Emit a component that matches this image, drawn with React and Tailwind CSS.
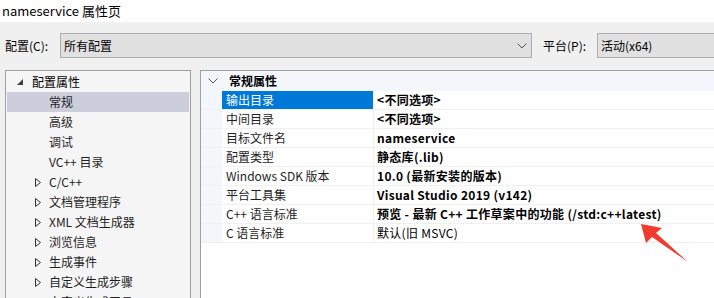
const FONT = { fontFamily: '"Noto Sans CJK SC", "Noto Sans", sans-serif' };

const TREE = [
  { label: "常规", indent: true, selected: true },
  { label: "高级", indent: true },
  { label: "调试", indent: true },
  { label: "VC++ 目录", indent: true },
  { label: "C/C++", collapsed: true },
  { label: "文档管理程序", collapsed: true },
  { label: "XML 文档生成器", collapsed: true },
  { label: "浏览信息", collapsed: true },
  { label: "生成事件", collapsed: true },
  { label: "自定义生成步骤", collapsed: true },
  { label: "自定义生成工具", collapsed: true },
];

const PROPS = [
  { name: "输出目录", value: "<不同选项>", bold: true, selected: true },
  { name: "中间目录", value: "<不同选项>", bold: true },
  { name: "目标文件名", value: "nameservice", bold: true },
  { name: "配置类型", value: "静态库(.lib)", bold: true },
  { name: "Windows SDK 版本", value: "10.0 (最新安装的版本)", bold: true },
  { name: "平台工具集", value: "Visual Studio 2019 (v142)", bold: true },
  { name: "C++ 语言标准", value: "预览 - 最新 C++ 工作草案中的功能 (/std:c++latest)", bold: true },
  { name: "C 语言标准", value: "默认(旧 MSVC)" },
];

function Chevron({ className }) {
  return (
    <svg className={className} width="10" height="6" viewBox="0 0 10 6">
      <path d="M0.5 0.5 L5 5 L9.5 0.5" fill="none" stroke="#555" strokeWidth="1" />
    </svg>
  );
}

function Combo({ text, className, arrow }) {
  return (
    <div className={`h-[25px] shrink-0 border border-[#adadad] bg-[#e1e1e1] flex items-center pl-[3px] text-[12px] text-black ${className}`}>
      <span className="flex-1">{text}</span>
      {arrow && <Chevron className="mr-[4px]" />}
    </div>
  );
}

export default function App() {
  return (
    <div className="relative w-[714px] h-[298px] overflow-hidden bg-[#f0f0f0] text-black" style={FONT}>
      <div className="h-[22px] bg-white pl-[2px] text-[13px] leading-[22px]">nameservice 属性页</div>

      <div className="mt-[11px] flex items-center text-[12px] w-[800px]">
        <span className="w-[60px] shrink-0 pl-[5px]">配置(C):</span>
        <Combo text="所有配置" arrow className="w-[472px]" />
        <span className="ml-[11px] w-[54px] shrink-0">平台(P):</span>
        <Combo text="活动(x64)" className="w-[140px]" />
      </div>

      <div className="mt-[12px] flex items-start w-[800px]">
        <div className="ml-[5px] w-[186px] shrink-0 h-[240px] border border-[#a0a0a0] bg-[#f5f5f5] pt-[1px] px-[1px] text-[12px]">
          <div className="h-[20px] flex items-center">
            <svg className="ml-[10px]" width="6" height="6" viewBox="0 0 6 6">
              <path d="M6 0 L6 6 L0 6 Z" fill="#404040" />
            </svg>
            <span className="ml-[9px]">配置属性</span>
          </div>
          {TREE.map((t) => (
            <div
              key={t.label}
              className={`h-[20px] flex items-center ${t.selected ? "bg-[#cccedb]" : ""}`}
            >
              <span className="w-[34px] flex justify-end">
                {t.collapsed && (
                  <svg width="6" height="9" viewBox="0 0 6 9">
                    <path d="M0.5 0.5 L5.5 4.5 L0.5 8.5 Z" fill="none" stroke="#333" strokeWidth="1" />
                  </svg>
                )}
              </span>
              <span className="ml-[8px] text-[#1e1e1e]">{t.label}</span>
            </div>
          ))}
        </div>

        <div className="ml-[9px] w-[560px] shrink-0 h-[240px] border-l border-t border-[#a0a0a0] bg-white text-[12px]">
          <div className="h-[20px] flex items-center bg-[#f3f6fa]">
            <Chevron className="ml-[7px]" />
            <span className="ml-[11px] font-bold">常规属性</span>
          </div>
          {PROPS.map((p) => (
            <div key={p.name} className="h-[19px] flex border-b border-[#f0f0f0]">
              <div className="w-[21px] bg-[#f3f6fa]" />
              <div
                className={`w-[152px] pl-[4px] flex items-center border-r border-[#f0f0f0] ${
                  p.selected ? "bg-[#0078d7] text-white" : "text-[#1e1e1e]"
                }`}
              >
                {p.name}
              </div>
              <div className={`flex-1 pl-[3px] flex items-center whitespace-nowrap tracking-[0.3px] ${p.bold ? "font-bold" : ""}`}>
                {p.value}
              </div>
            </div>
          ))}
        </div>
      </div>

      <svg className="absolute left-0 top-0 pointer-events-none" width="714" height="298" viewBox="0 0 714 298">
        <path d="M641 224 L662 228 L656 233 L688 262 L652 237 L646 243 Z" fill="#f23a2f" />
      </svg>
    </div>
  );
}
